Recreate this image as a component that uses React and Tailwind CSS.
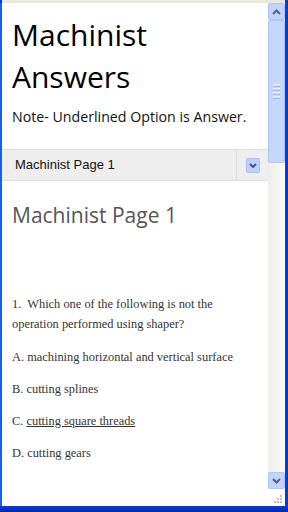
import React from "react";

function Arrow({ up }) {
  return (
    <svg width="9" height="6" viewBox="0 0 9 6">
      {up ? (
        <path d="M1 5 L4.5 1.5 L8 5" fill="none" stroke="#4d6185" strokeWidth="2" />
      ) : (
        <path d="M1 1 L4.5 4.5 L8 1" fill="none" stroke="#4d6185" strokeWidth="2" />
      )}
    </svg>
  );
}

export default function App() {
  const serif = { fontFamily: '"Liberation Serif", "DejaVu Serif", serif' };
  const sans = { fontFamily: '"Open Sans", "DejaVu Sans", sans-serif' };
  return (
    <div className="w-[288px] h-[512px] flex flex-col bg-[#0a3bd8] overflow-hidden">
      <div className="h-[3px] bg-[#ece9d8] ml-[2px] mr-[3px]" />
      <div className="flex-1 flex pl-[2px] pr-[3px] bg-[linear-gradient(to_right,#1a5ef0,#0a3bd8)] min-h-0">
        <div className="flex-1 bg-white overflow-hidden min-w-0">
          <div className="px-[10px] pt-[11px]">
            <div className="text-[30px] leading-[42px] text-black" style={sans}>Machinist<br />Answers</div>
            <div className="mt-[9px] text-[14.2px] leading-[20px] text-[#111] whitespace-nowrap" style={sans}>
              Note- Underlined Option is Answer.
            </div>
          </div>
          <div className="mt-[22px] h-[32px] bg-[#eeeeee] border-y border-[#dedede] flex items-center">
            <div className="flex-1 pl-[13px] text-[13px] text-[#111]" style={{ fontFamily: '"Liberation Sans", Arial, sans-serif' }}>
              Machinist Page 1
            </div>
            <div className="w-[32px] h-full border-l border-[#dcdcdc] flex items-center justify-center">
              <div className="w-[14px] h-[15px] rounded-[2px] bg-[#bcd0fb] border border-[#a9c0f5] flex items-center justify-center">
                <svg width="8" height="5" viewBox="0 0 8 5">
                  <path d="M1 1 L4 4 L7 1" fill="none" stroke="#3c4e78" strokeWidth="1.8" />
                </svg>
              </div>
            </div>
          </div>
          <div className="px-[10px] pt-[20px] text-[21px] leading-[28px] text-[#555]" style={sans}>
            Machinist Page 1
          </div>
          <div className="px-[10px] pt-[65px] text-[12.4px] text-[#333]" style={serif}>
            <div className="leading-[20px]">1.&nbsp; Which one of the following is not the operation performed using shaper?</div>
            <div className="mt-[13px] leading-[20px]">A. machining horizontal and vertical surface</div>
            <div className="mt-[12px] leading-[20px]">B. cutting splines</div>
            <div className="mt-[12px] leading-[20px]">C. <span className="underline">cutting square threads</span></div>
            <div className="mt-[12px] leading-[20px]">D. cutting gears</div>
          </div>
        </div>
        <div className="w-[17px] flex flex-col bg-[linear-gradient(to_right,#eeede5,#fbfbf8)]">
          <div className="h-[17px] rounded-[2px] bg-[#c3d4fc] border border-[#b1c6f6] flex items-center justify-center">
            <Arrow up />
          </div>
          <div className="h-[143px] rounded-[2px] bg-[#c6d6fd] border border-[#aec2f3] flex items-center justify-center">
            <div className="flex flex-col gap-[1px]">
              <div className="w-[7px] h-[1px] bg-[#eef3ff]" />
              <div className="w-[7px] h-[1px] bg-[#a7bcec]" />
              <div className="w-[7px] h-[1px] bg-[#eef3ff]" />
              <div className="w-[7px] h-[1px] bg-[#a7bcec]" />
              <div className="w-[7px] h-[1px] bg-[#eef3ff]" />
              <div className="w-[7px] h-[1px] bg-[#a7bcec]" />
              <div className="w-[7px] h-[1px] bg-[#eef3ff]" />
              <div className="w-[7px] h-[1px] bg-[#a7bcec]" />
            </div>
          </div>
          <div className="flex-1" />
          <div className="h-[17px] rounded-[2px] bg-[#c3d4fc] border border-[#b1c6f6] flex items-center justify-center">
            <Arrow />
          </div>
          <div className="h-[17px] bg-white flex items-end justify-end p-[2px]">
            <svg width="9" height="9" viewBox="0 0 9 9">
              <rect x="6" y="0" width="2" height="2" fill="#c4c1b4" />
              <rect x="3" y="3" width="2" height="2" fill="#c4c1b4" />
              <rect x="6" y="3" width="2" height="2" fill="#c4c1b4" />
              <rect x="0" y="6" width="2" height="2" fill="#c4c1b4" />
              <rect x="3" y="6" width="2" height="2" fill="#c4c1b4" />
              <rect x="6" y="6" width="2" height="2" fill="#c4c1b4" />
            </svg>
          </div>
        </div>
      </div>
      <div className="h-[6px] bg-[linear-gradient(to_bottom,#0b3ed6,#0026a8)]" />
    </div>
  );
}
